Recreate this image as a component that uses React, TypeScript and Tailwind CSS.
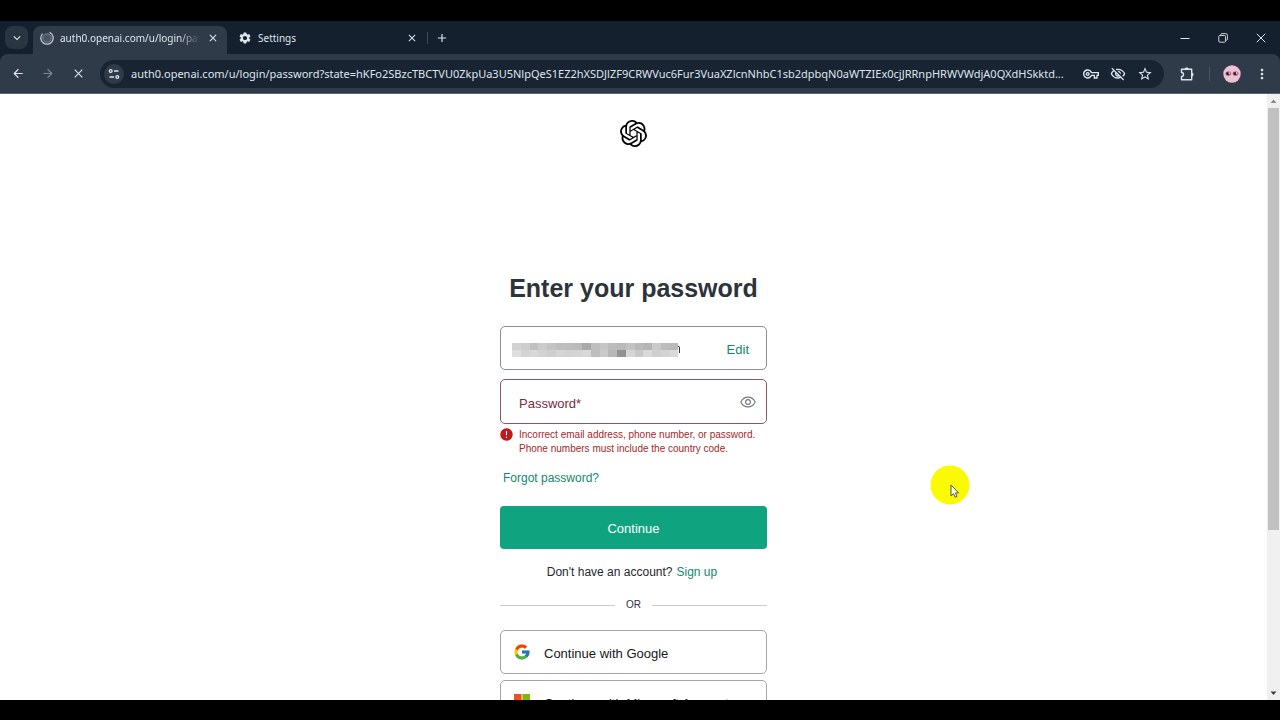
import { useState } from 'react';
import type { ReactNode } from 'react';
import { FcGoogle } from 'react-icons/fc';
import { SiOpenai } from 'react-icons/si';
import {
  MdAdd,
  MdArrowBack,
  MdArrowForward,
  MdClose,
  MdKeyboardArrowDown,
  MdMoreVert,
  MdOutlineVisibilityOff,
  MdOutlineVpnKey,
  MdSettings,
  MdStarOutline,
} from 'react-icons/md';

const address =
  'auth0.openai.com/u/login/password?state=hKFo2SBzcTBCTVU0ZkpUa3U5NlpQeS1EZ2hXSDJlZF9CRWVuc6Fur3VuaXZlcnNhbC1sb2dpbqN0aWTZIEx0cjJRRnpHRWVWdjA0QXdHSkktd...';

const maskTones = [
  ['#d2d2d2', '#cdcdcd', '#c0c0c0', '#cbcbcb', '#c4c4c4', '#bdbdbd', '#bdbdbd', '#bababa', '#a9a9a9', '#bebebe', '#c6c6c6', '#bcbcbc', '#b9b9b9', '#c3c3c3', '#bababa', '#b4b4b4', '#cacaca', '#bdbdbd', '#bababa'],
  ['#dedede', '#d5d5d5', '#d9d9d9', '#d3d3d3', '#cecece', '#d5d5d5', '#d2d2d2', '#d4d4d4', '#d8d8d8', '#bebebe', '#cacaca', '#b7b7b7', '#929292', '#d6d6d6', '#c8c8c8', '#d9d9d9', '#cfcfcf', '#d4d4d4', '#dadada'],
];

function IconButton({ label, className = '', children }: { label: string; className?: string; children: ReactNode }) {
  return (
    <button type="button" aria-label={label} className={`flex shrink-0 items-center justify-center ${className}`}>
      {children}
    </button>
  );
}

function TabStrip() {
  return (
    <div className="flex h-[33px] bg-[#14202d] pl-[5px] text-[#dfe5ec]">
      <IconButton label="Search tabs" className="mt-[5px] size-[23px] rounded-lg bg-[#2a3542]">
        <MdKeyboardArrowDown size={14} />
      </IconButton>
      <div className="mt-[5px] ml-[5px] flex w-[194px] items-center rounded-t-lg bg-[#303b49] pr-[7px] pb-1 pl-[7px]">
        <svg viewBox="0 0 14 14" className="size-[14px] shrink-0" fill="none">
          <circle cx="7" cy="7" r="4.2" fill="#4b5561" stroke="#7c8590" strokeWidth="1" />
          <path d="M9.5 1.3A6.2 6.2 0 1 1 2.6 2.6" stroke="#c3cad2" strokeWidth="1.3" />
        </svg>
        <span className="ml-[6px] min-w-0 flex-1 text-[10px] whitespace-nowrap [mask-image:linear-gradient(to_right,black_85%,transparent)]">
          auth0.openai.com/u/login/pass
        </span>
        <IconButton label="Close tab" className="ml-[6px] size-[14px]">
          <MdClose size={12} />
        </IconButton>
      </div>
      <div className="mt-[5px] flex w-[200px] items-center pr-2 pb-1 pl-[11px]">
        <MdSettings size={14} className="shrink-0" />
        <span className="ml-[6px] flex-1 text-[10px]">Settings</span>
        <IconButton label="Close tab" className="size-[14px]">
          <MdClose size={12} />
        </IconButton>
      </div>
      <div className="mt-[11px] h-3 w-px bg-[#3c4856]" />
      <IconButton label="New tab" className="ml-[6px] h-[33px] w-4">
        <MdAdd size={14} />
      </IconButton>
      <div className="flex-1" />
      <IconButton label="Minimize" className="w-[38px]">
        <svg viewBox="0 0 10 10" className="size-[10px]" stroke="currentColor">
          <path d="M0.5 5.5h9" />
        </svg>
      </IconButton>
      <IconButton label="Restore" className="w-[37px]">
        <svg viewBox="0 0 10 10" className="size-[10px]" fill="none" stroke="currentColor" strokeWidth="0.9">
          <rect x="0.8" y="2.5" width="6.7" height="6.7" rx="1" />
          <path d="M2.8 2.3V1.6a1 1 0 0 1 1-1h4a1.6 1.6 0 0 1 1.6 1.6v4a1 1 0 0 1-1 1h-.6" />
        </svg>
      </IconButton>
      <IconButton label="Close" className="w-[39px]">
        <svg viewBox="0 0 10 10" className="size-[10px]" stroke="currentColor">
          <path d="M0.8 0.8l8.4 8.4M9.2 0.8l-8.4 8.4" />
        </svg>
      </IconButton>
    </div>
  );
}

function Toolbar() {
  return (
    <div className="bg-[#14202d]">
      <div className="flex h-10 items-center rounded-t-lg border-b border-[#59636f] bg-[#303b49] pr-[10px] pl-[11px] text-[#dfe5ec]">
        <IconButton label="Back" className="size-[14px]">
          <MdArrowBack size={15} />
        </IconButton>
        <IconButton label="Forward" className="ml-4 size-[14px] text-[#7b8592]">
          <MdArrowForward size={15} />
        </IconButton>
        <IconButton label="Stop loading" className="ml-4 size-[14px]">
          <svg viewBox="0 0 10 10" className="size-[9px]" stroke="currentColor" strokeWidth="1.2">
            <path d="M0.8 0.8l8.4 8.4M9.2 0.8l-8.4 8.4" />
          </svg>
        </IconButton>
        <div className="ml-[15px] flex h-[28px] min-w-0 flex-1 items-center rounded-full bg-[#192433] pr-[11px] pl-1">
          <IconButton label="Site information" className="size-5 rounded-full bg-[#303b49]">
            <svg viewBox="0 0 12 12" className="size-3" fill="none" stroke="currentColor" strokeWidth="1.3">
              <circle cx="2.7" cy="3" r="1.4" />
              <path d="M6 3h4.5M1.5 9H6" />
              <circle cx="9.3" cy="9" r="1.4" />
            </svg>
          </IconButton>
          <input
            aria-label="Address"
            readOnly
            value={address}
            className="ml-[7px] min-w-0 flex-1 bg-transparent text-[11px] leading-5 text-[#dfe5ec] outline-none"
          />
          <IconButton label="Passwords" className="ml-[6px] size-4">
            <MdOutlineVpnKey size={16} />
          </IconButton>
          <IconButton label="Third-party cookies blocked" className="ml-[11px] size-4">
            <MdOutlineVisibilityOff size={16} />
          </IconButton>
          <IconButton label="Bookmark this tab" className="ml-[11px] size-4">
            <MdStarOutline size={16} />
          </IconButton>
        </div>
        <IconButton label="Extensions" className="ml-[15px] size-4">
          <svg viewBox="0 0 16 16" className="size-4" fill="none" stroke="currentColor" strokeWidth="1.4" strokeLinejoin="round">
            <path d="M2.5 3.2h10.2v10.6H2.5v-3.3a2 2 0 0 0 0-4z" />
            <path d="M6 2.9a1.6 1.2 0 0 1 3.2 0zM13 6.9a1.2 1.6 0 0 1 0 3.2z" fill="currentColor" strokeWidth="0.7" />
          </svg>
        </IconButton>
        <div className="ml-[14px] h-[14px] w-px bg-[#4a5563]" />
        <IconButton label="Profile" className="ml-[13px] size-[18px]">
          <svg viewBox="0 0 18 18" className="size-[18px]">
            <circle cx="9" cy="9" r="8.7" fill="#f2bfd6" />
            <ellipse cx="5.4" cy="8.6" rx="2.9" ry="2.4" fill="#a3798f" />
            <ellipse cx="12.6" cy="8.6" rx="2.9" ry="2.4" fill="#a3798f" />
            <circle cx="4.8" cy="8.6" r="1.7" fill="#35242e" />
            <circle cx="12" cy="8.6" r="1.7" fill="#35242e" />
            <circle cx="6.3" cy="8.1" r="0.8" fill="#f8e8f0" />
            <circle cx="13.6" cy="8.1" r="0.8" fill="#f8e8f0" />
          </svg>
        </IconButton>
        <IconButton label="Menu" className="ml-[13px] size-4">
          <MdMoreVert size={16} />
        </IconButton>
      </div>
    </div>
  );
}

function ObscuredEmail() {
  return (
    <div className="flex items-center text-[#2d333a]">
      <svg viewBox="0 0 166 14" className="h-[14px] w-[166px]" shapeRendering="crispEdges" role="img" aria-label="Hidden email address">
        {maskTones.map((row, y) =>
          row.map((tone, x) => <rect key={`${x}-${y}`} x={x * 8.75} y={y * 7} width="9" height="7" fill={tone} />),
        )}
      </svg>
      <svg viewBox="0 0 3 14" className="h-[14px] w-[3px]" fill="none" stroke="#2d333a">
        <path d="M0 3Q1.5 3 1.5 5V10" />
      </svg>
    </div>
  );
}

function LoginForm() {
  const [password, setPassword] = useState('');
  const [visible, setVisible] = useState(false);
  return (
    <form className="mx-auto w-[267px]" onSubmit={(event) => event.preventDefault()}>
      <h1 className="text-center text-[25px] leading-8 font-bold whitespace-nowrap text-[#2d333a]">Enter your password</h1>

      <div className="mt-[22px] flex h-11 items-center justify-between rounded-[5px] border border-[#8c8f94] pt-1 pr-[17px] pl-[11px]">
        <ObscuredEmail />
        <a href="#edit" className="text-[13px] text-[#12896a]">
          Edit
        </a>
      </div>

      <div className="mt-[9px] flex h-[45px] items-center rounded-[5px] border border-[#8b5660] pr-[10px] pl-[18px]">
        <label htmlFor="password" className="sr-only">
          Password
        </label>
        <input
          id="password"
          type={visible ? 'text' : 'password'}
          value={password}
          onChange={(event) => setPassword(event.target.value)}
          placeholder="Password*"
          aria-invalid="true"
          aria-describedby="password-error"
          className="min-w-0 flex-1 bg-transparent pt-1 text-[13px] text-[#2d333a] outline-none placeholder:text-[#7d2745]"
        />
        <button type="button" aria-label="Show password" onClick={() => setVisible(!visible)}>
          <svg viewBox="0 0 16 12" className="h-3 w-4" fill="none" stroke="#6f7780" strokeWidth="1.1">
            <path d="M0.8 6C2.4 2.8 5 1.1 8 1.1S13.6 2.8 15.2 6C13.6 9.2 11 10.9 8 10.9S2.4 9.2 0.8 6Z" />
            <circle cx="8" cy="6" r="2.4" />
          </svg>
        </button>
      </div>

      <div id="password-error" className="mt-1 flex text-[10px] leading-[14px] text-[#a5282c]">
        <svg viewBox="0 0 13 13" className="size-[13px] shrink-0">
          <circle cx="6.5" cy="6.5" r="6.2" fill="#c11820" />
          <path d="M6.5 3v4.3M6.5 8.7v1.2" stroke="#fff" strokeWidth="1.1" />
        </svg>
        <p className="ml-[6px] whitespace-nowrap">
          Incorrect email address, phone number, or password.
          <br />
          Phone numbers must include the country code.
        </p>
      </div>

      <p className="mt-[14px] pl-[3px] text-[12px] leading-4">
        <a href="#forgot" className="text-[#12896a]">
          Forgot password?
        </a>
      </p>

      <button type="submit" className="mt-5 h-[43px] w-full rounded-[4px] bg-[#10a37f] pt-[3px] text-[13px] text-white">
        Continue
      </button>

      <p className="mt-[15px] text-center text-[12px] leading-4 text-[#22272d]">
        <span>Don't have an account?</span>
        <a href="#signup" className="mr-[3px] ml-1 text-[#12896a]">
          Sign up
        </a>
      </p>

      <div className="mt-[17px] flex items-center text-[10px] leading-4 text-[#2d333a]">
        <span className="h-px flex-1 bg-[#c8cbce]" />
        <span className="px-[11px]">OR</span>
        <span className="h-px flex-1 bg-[#c8cbce]" />
      </div>

      <div className="mt-[17px] flex flex-col gap-[6px] text-[13px] text-[#15181b]">
        <button type="button" className="flex h-11 items-center gap-[13px] rounded-[5px] border border-[#a2a5a9] pl-3">
          <FcGoogle size={18} />
          <span className="pt-[3px]">Continue with Google</span>
        </button>
        <button type="button" className="flex h-11 items-center gap-[13px] rounded-[5px] border border-[#a2a5a9] pl-3">
          <svg viewBox="0 0 18 18" className="size-[18px]">
            <path fill="#f25022" d="M1 1h7.6v7.6H1z" />
            <path fill="#7fba00" d="M9.4 1H17v7.6H9.4z" />
            <path fill="#00a4ef" d="M1 9.4h7.6V17H1z" />
            <path fill="#ffb900" d="M9.4 9.4H17V17H9.4z" />
          </svg>
          <span className="pt-[3px]">Continue with Microsoft Account</span>
        </button>
      </div>
    </form>
  );
}

function Scrollbar() {
  return (
    <div aria-hidden="true" className="flex w-[13px] shrink-0 flex-col items-center bg-[#f0f0f0]">
      <svg viewBox="0 0 13 14" className="h-[14px] w-[13px]">
        <path d="M3.5 9h6l-3-3.5z" fill="#8b8b8b" />
      </svg>
      <div className="flex h-full min-h-0 w-full flex-1 flex-col px-px">
        <div className="h-[73%] bg-[#c1c1c1]" />
      </div>
      <svg viewBox="0 0 13 14" className="h-[14px] w-[13px]">
        <path d="M3.5 5.5h6l-3 3.5z" fill="#404040" />
      </svg>
    </div>
  );
}

export default function App() {
  return (
    <div className="relative flex h-screen flex-col overflow-hidden bg-black pt-[21px] pb-5 font-['Liberation_Sans',sans-serif]">
      <header className="font-['Noto_Sans',sans-serif]">
        <TabStrip />
        <Toolbar />
      </header>
      <div className="flex min-h-0 flex-1 bg-white">
        <main className="min-w-0 flex-1 overflow-hidden pt-[26px]">
          <SiOpenai size={27} className="mx-auto text-black" />
          <div className="mt-[125px]">
            <LoginForm />
          </div>
        </main>
        <Scrollbar />
      </div>
      <svg viewBox="0 0 40 40" className="pointer-events-none absolute top-[465px] left-[930px] size-10" aria-hidden="true">
        <circle cx="20" cy="20" r="19.5" fill="#fafa05" />
        <path d="M21 20v11l2.5-2.3 1.6 3.5 1.9-.8-1.6-3.5h3.2z" fill="#fff" stroke="#555530" strokeWidth="1" />
      </svg>
    </div>
  );
}
